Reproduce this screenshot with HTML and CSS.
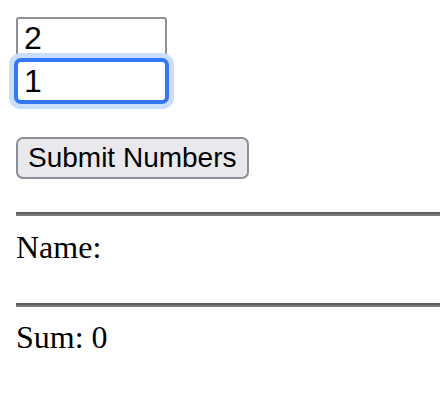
FILE: index.html
```html
<!DOCTYPE html>
<html lang="en">
<head>
    <meta charset="UTF-8">
    <meta name="viewport" content="width=device-width, initial-scale=1.0">
    <title>Sum</title>
    <link rel="stylesheet" href="styles.css">
</head>
<body>
    <div class="fields">
        <input class="number" type="text" value="2">
        <input class="number focused" type="text" value="1">
    </div>
    <button class="submit">Submit Numbers</button>
    <hr>
    <p class="name">Name:</p>
    <hr>
    <p class="sum">Sum: 0</p>
</body>
</html>
```

FILE: styles.css
```css
body {
    margin: 0;
    padding: 17px 0 0 16px;
    font-family: "Liberation Serif", "Times New Roman", serif;
    font-size: 32px;
    color: black;
    background: white;
}
.fields {
    display: flex;
    flex-direction: column;
    align-items: flex-start;
    gap: 1px;
}
.number {
    box-sizing: border-box;
    width: 151px;
    height: 42px;
    margin: 0;
    padding: 0 6px;
    border: 2px solid #8e8e96;
    border-radius: 3px;
    font-family: "Liberation Sans", Arial, sans-serif;
    font-size: 32px;
    color: black;
    background: white;
    outline: none;
}
.focused {
    border-color: #3478f6;
    border-radius: 5px;
    box-shadow: 0 0 0 2px #3478f6, 0 0 0 7px #c8defa;
}
.submit {
    display: block;
    box-sizing: border-box;
    height: 42px;
    margin: 35px 0 0 0;
    padding: 0 10px;
    border: 2px solid #8e8e96;
    border-radius: 7px;
    background: #e9e9ed;
    font-family: "Liberation Sans", Arial, sans-serif;
    font-size: 28px;
    color: black;
}
hr {
    height: 0;
    margin: 33px 0 0 0;
    border: none;
    border-top: 2px solid #5e5e5e;
    border-bottom: 2px solid #7a7a7a;
}
.name {
    margin: 13px 0 37px 0;
    line-height: 37px;
}
.sum {
    margin: 12px 0 0 0;
    line-height: 37px;
}
.name + hr {
    margin-top: 0;
}
```
